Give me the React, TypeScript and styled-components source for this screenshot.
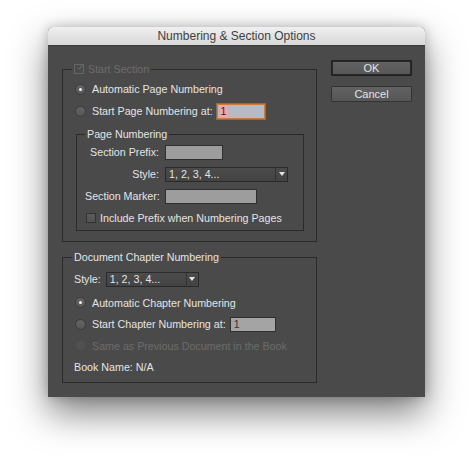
import React from 'react';
import styled, { createGlobalStyle } from 'styled-components';

const GlobalStyle = createGlobalStyle`
  html, body {
    margin: 0;
    padding: 0;
    background: #ffffff;
  }
  body {
    font-family: "Liberation Sans", Arial, sans-serif;
  }
`;

// colour chart
const colors = {
  body: '#4a4a4a',
  line: '#2a2a2a',
  text: '#e4e4e4',
  disabled: '#6c6c6c',
  field: '#9d9d9d',
  button: '#5a5a5a',
};

const Page = styled.div`
  width: 474px;
  height: 467px;
  padding: 27px 0 0 48px;
  box-sizing: border-box;
  overflow: hidden;
`;

const Dialog = styled.div`
  width: 377px;
  background: ${colors.body};
  border-radius: 5px 5px 0 0;
  box-shadow: 0 16px 36px rgba(0, 0, 0, 0.5), 0 0 12px rgba(0, 0, 0, 0.22);
`;

const TitleBar = styled.div`
  height: 19px;
  display: flex;
  align-items: center;
  justify-content: center;
  border-radius: 5px 5px 0 0;
  background: linear-gradient(#f0f0f0, #d8d8d8);
  border-bottom: 1px solid #3a3a3a;
  box-sizing: border-box;
  font-size: 12px;
  color: #3f3f3f;
`;

const Body = styled.div`
  display: flex;
  align-items: flex-start;
  gap: 14px;
  padding: 14px 13px 14px 14px;
  font-size: 10.7px;
  color: ${colors.text};
`;

const LeftColumn = styled.div`
  width: 255px;
  padding-top: 2px;
  display: flex;
  flex-direction: column;
`;

const ButtonColumn = styled.div`
  display: flex;
  flex-direction: column;
  gap: 10px;
  width: 81px;
`;

const DialogButton = styled.button<{ $default?: boolean }>`
  height: 16px;
  padding: 0;
  box-sizing: border-box;
  font-family: inherit;
  font-size: 11px;
  color: #e4e4e4;
  background: linear-gradient(#626262, #565656);
  border: 1px solid ${(p) => (p.$default ? '#1f1f1f' : '#333333')};
  box-shadow: ${(p) => (p.$default ? 'inset 0 0 0 1px #2a2a2a' : 'none')};
  border-radius: 1px;
`;

const Group = styled.fieldset<{ $pad: string; $gapTop?: number }>`
  margin: ${(p) => p.$gapTop ?? 0}px 0 0 0;
  padding: ${(p) => p.$pad};
  border: 1px solid ${colors.line};
  min-width: 0;
  display: flex;
  flex-direction: column;
`;

const SubGroup = styled(Group)`
  margin-left: 2px;
`;

const Legend = styled.legend<{ $shift: number; $muted?: boolean }>`
  padding: 0 2px;
  margin-left: ${(p) => p.$shift}px;
  line-height: 14px;
  height: 14px;
  display: flex;
  align-items: center;
  gap: 4px;
  color: ${(p) => (p.$muted ? colors.disabled : colors.text)};
`;

const Row = styled.div<{ $h?: number; $top?: number; $gap?: number }>`
  display: flex;
  align-items: center;
  gap: ${(p) => p.$gap ?? 6}px;
  height: ${(p) => p.$h ?? 22}px;
  margin-top: ${(p) => p.$top ?? 0}px;
  white-space: nowrap;
`;

const FieldRow = styled.div`
  display: grid;
  grid-template-columns: 74px auto;
  column-gap: 6px;
  align-items: center;
  height: 22px;
  white-space: nowrap;
`;

const FieldLabel = styled.span`
  text-align: right;
`;

const Radio = styled.span<{ $on?: boolean; $off?: boolean }>`
  position: relative;
  flex: none;
  width: 11px;
  height: 11px;
  margin-left: 1px;
  border-radius: 50%;
  box-sizing: border-box;
  background: ${(p) => (p.$off ? '#505050' : 'linear-gradient(#646464, #575757)')};
  border: 1px solid ${(p) => (p.$off ? '#4c4c4c' : '#3a3a3a')};
  &::after {
    content: '';
    display: ${(p) => (p.$on ? 'block' : 'none')};
    position: absolute;
    left: 3px;
    top: 3px;
    width: 3px;
    height: 3px;
    border-radius: 50%;
    background: #f4f4f4;
  }
`;

const Check = styled.span<{ $muted?: boolean }>`
  flex: none;
  width: 10px;
  height: 10px;
  box-sizing: border-box;
  border: 1px solid ${(p) => (p.$muted ? '#666666' : '#333333')};
  background: ${(p) => (p.$muted ? 'transparent' : 'linear-gradient(#5c5c5c, #525252)')};
  display: flex;
  align-items: center;
  justify-content: center;
  overflow: visible;
`;

const Muted = styled.span`
  color: ${colors.disabled};
`;

const TextField = styled.span<{ $w: number; $tone?: string }>`
  display: flex;
  align-items: center;
  width: ${(p) => p.$w}px;
  height: 15px;
  box-sizing: border-box;
  padding-left: 3px;
  background: ${(p) => p.$tone ?? colors.field};
  border: 1px solid #2f2f2f;
  color: #333333;
  font-size: 10.5px;
`;

const FocusField = styled(TextField)`
  margin-left: -2px;
  background: #b7bac2;
  border: 1px solid #cf7a36;
  box-shadow: 0 0 0 1px rgba(214, 128, 60, 0.55);
  padding-left: 2px;
`;

const Selected = styled.span`
  background: #f2a6ab;
  color: #5a0d10;
  padding: 0 1px;
  line-height: 11px;
`;

const Select = styled.span<{ $w: number }>`
  display: flex;
  align-items: center;
  width: ${(p) => p.$w}px;
  height: 15px;
  box-sizing: border-box;
  background: linear-gradient(#4b4b4b, #434343);
  border: 1px solid #2a2a2a;
  color: ${colors.text};
`;

const SelectText = styled.span`
  flex: 1;
  padding-left: 3px;
`;

const SelectArrow = styled.span`
  width: 11px;
  height: 100%;
  border-left: 1px solid #333333;
  display: flex;
  align-items: center;
  justify-content: center;
`;

const Tick = ({ muted }: { muted?: boolean }) => (
  <svg width="11" height="11" viewBox="0 0 11 11" style={{ marginTop: -3, marginLeft: 2 }}>
    <path d="M1.5 5.5 L4.2 8.5 L10 1" fill="none" stroke={muted ? '#777777' : '#eeeeee'} strokeWidth="1.6" />
  </svg>
);

const Arrow = () => (
  <svg width="6" height="4" viewBox="0 0 6 4">
    <path d="M0 0 H6 L3 4 Z" fill="#e6e6e6" />
  </svg>
);

const StyleSelect = ({ width }: { width: number }) => (
  <Select $w={width}>
    <SelectText>1, 2, 3, 4...</SelectText>
    <SelectArrow>
      <Arrow />
    </SelectArrow>
  </Select>
);

export default function App() {
  return (
    <>
      <GlobalStyle />
      <Page>
        <Dialog>
          <TitleBar>Numbering &amp; Section Options</TitleBar>
          <Body>
            <LeftColumn>
              <Group $pad="2px 12px 10px 11px">
                <Legend $shift={-2} $muted>
                  <Check $muted>
                    <Tick muted />
                  </Check>
                  Start Section
                </Legend>
                <Row>
                  <Radio $on />
                  Automatic Page Numbering
                </Row>
                <Row>
                  <Radio />
                  Start Page Numbering at:
                  <FocusField $w={48}>
                    <Selected>1</Selected>
                  </FocusField>
                </Row>

                <SubGroup $pad="0 8px 1px 8px" $gapTop={5}>
                  <Legend $shift={0}>Page Numbering</Legend>
                  <FieldRow>
                    <FieldLabel>Section Prefix:</FieldLabel>
                    <TextField $w={58} />
                  </FieldRow>
                  <FieldRow>
                    <FieldLabel>Style:</FieldLabel>
                    <StyleSelect width={123} />
                  </FieldRow>
                  <FieldRow>
                    <FieldLabel>Section Marker:</FieldLabel>
                    <TextField $w={92} />
                  </FieldRow>
                  <Row $gap={4}>
                    <Check style={{ marginLeft: 1 }} />
                    Include Prefix when Numbering Pages
                  </Row>
                </SubGroup>
              </Group>

              <Group $pad="4px 12px 4px 11px" $gapTop={8}>
                <Legend $shift={-2}>Document Chapter Numbering</Legend>
                <Row $h={22} $gap={5}>
                  Style:
                  <StyleSelect width={93} />
                </Row>
                <Row $h={21.5} $top={2}>
                  <Radio $on />
                  Automatic Chapter Numbering
                </Row>
                <Row $h={21.5} $gap={4}>
                  <Radio style={{ marginRight: 2 }} />
                  Start Chapter Numbering at:
                  <TextField $w={46} $tone="#a4a4a4">1</TextField>
                </Row>
                <Row $h={21.5}>
                  <Radio $off />
                  <Muted>Same as Previous Document in the Book</Muted>
                </Row>
                <Row $h={21.5}>Book Name: N/A</Row>
              </Group>
            </LeftColumn>

            <ButtonColumn>
              <DialogButton $default>OK</DialogButton>
              <DialogButton>Cancel</DialogButton>
            </ButtonColumn>
          </Body>
        </Dialog>
      </Page>
    </>
  );
}
